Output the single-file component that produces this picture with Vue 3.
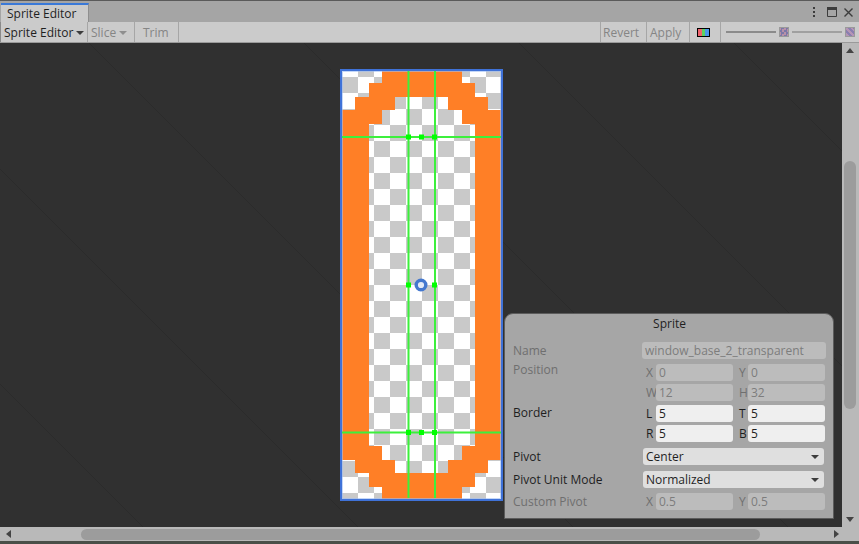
<template>
  <div class="window">
    <div class="tabbar">
      <div class="tab">Sprite Editor</div>
      <div class="window-icons">
        <svg width="4" height="12" viewBox="0 0 4 12"><rect x="1" y="1" width="2" height="2" /><rect x="1" y="5" width="2" height="2" /><rect x="1" y="9" width="2" height="2" /></svg>
        <svg width="11" height="11" viewBox="0 0 11 11"><path d="M0.5 1.5h9v8h-9z" fill="none" stroke="#3c3c3c" /><rect y="0" width="10" height="3" fill="#3c3c3c" /></svg>
        <svg class="close" width="11" height="11" viewBox="0 0 11 11"><path d="M1.5 1.5l8 8M9.5 1.5l-8 8" stroke="#3c3c3c" stroke-width="1.4" fill="none" /></svg>
      </div>
    </div>

    <div class="toolbar">
      <div class="tool mode">Sprite Editor<span class="caret"></span></div>
      <div class="tool off slice">Slice<span class="caret light"></span></div>
      <div class="tool off trim">Trim</div>
      <div class="spacer"></div>
      <div class="tool off revert">Revert</div>
      <div class="tool off apply">Apply</div>
      <div class="tool channels">
        <svg width="13" height="9" viewBox="0 0 13 9">
          <rect x="0" y="0" width="13" height="9" fill="#000" />
          <rect x="1" y="1" width="4" height="7" fill="#f0646e" />
          <rect x="5" y="1" width="3" height="7" fill="#5ed25e" />
          <rect x="8" y="1" width="4" height="7" fill="#4a96ea" />
        </svg>
      </div>
      <div class="sliders">
        <div class="track dark"></div>
        <span class="swatch"></span>
        <div class="track"></div>
        <span class="swatch last"></span>
      </div>
    </div>

    <div class="middle">
      <div class="canvas">
        <svg class="diagonals" width="842" height="485" viewBox="0 42 842 485">
          <line v-for="d in diagonals" :key="d" :x1="d + 42" y1="42" :x2="d + 527" y2="527" />
        </svg>

        <svg class="sprite" width="166" height="436" viewBox="339 67 166 436">
          <defs>
            <pattern id="checker" patternUnits="userSpaceOnUse" x="342" y="77" width="32" height="32">
              <rect width="32" height="32" fill="#fff" />
              <rect width="16" height="16" fill="#c9c9c9" />
              <rect x="16" y="16" width="16" height="16" fill="#c9c9c9" />
            </pattern>
          </defs>
          <rect x="342" y="70" width="159.5" height="430" fill="url(#checker)" />
          <rect
            v-for="(s, i) in orangeRects"
            :key="i"
            :x="s.x"
            :y="s.y"
            :width="s.w"
            :height="s.h"
            fill="#ff7f26"
            shape-rendering="crispEdges"
          />
          <rect x="341" y="70" width="161" height="430" fill="none" stroke="#3f72d8" stroke-width="2" />
          <rect x="342.5" y="71.5" width="158" height="427" fill="none" stroke="#9dbcf4" stroke-opacity="0.6" />
          <g class="guides" stroke="#3cf03c" stroke-width="2">
            <line x1="408.5" y1="71" x2="408.5" y2="498" />
            <line x1="435" y1="71" x2="435" y2="498" />
            <line x1="342" y1="137" x2="501" y2="137" />
            <line x1="342" y1="432.5" x2="501" y2="432.5" />
          </g>
          <rect v-for="(h, i) in handles" :key="i" :x="h[0] - 2.5" :y="h[1] - 2.5" width="5" height="5" fill="#00ff00" />
          <circle cx="421" cy="285" r="4.8" fill="#e3eaf6" stroke="#4478cf" stroke-width="3.4" />
        </svg>

        <div class="panel">
          <div class="panel-title">Sprite</div>

          <div class="row">
            <div class="label dim">Name</div>
            <div class="field off name">window_base_2_transparent</div>
          </div>

          <div class="row position">
            <div class="label dim up3">Position</div>
            <div class="pairs">
              <div v-for="p in positionFields" :key="p.letter" class="pair dim">
                <span class="letter">{{ p.letter }}</span>
                <div class="field off">{{ p.value }}</div>
              </div>
            </div>
          </div>

          <div class="row border-row">
            <div class="label up1">Border</div>
            <div class="pairs">
              <div v-for="p in borderFields" :key="p.letter" class="pair">
                <span class="letter">{{ p.letter }}</span>
                <div class="field on">{{ p.value }}</div>
              </div>
            </div>
          </div>

          <div class="row pivot">
            <div class="label">Pivot</div>
            <div class="select">Center<span class="caret"></span></div>
          </div>

          <div class="row pivot-mode">
            <div class="label">Pivot Unit Mode</div>
            <div class="select">Normalized<span class="caret"></span></div>
          </div>

          <div class="row custom">
            <div class="label dim">Custom Pivot</div>
            <div class="pairs">
              <div v-for="p in customFields" :key="p.letter" class="pair dim">
                <span class="letter">{{ p.letter }}</span>
                <div class="field off">{{ p.value }}</div>
              </div>
            </div>
          </div>
        </div>
      </div>

      <div class="vscroll">
        <span class="arrow up"></span>
        <div class="vthumb"></div>
        <span class="arrow down"></span>
      </div>
    </div>

    <div class="hscroll">
      <span class="arrow left"></span>
      <div class="hthumb"></div>
      <span class="arrow right"></span>
    </div>
    <div class="under"></div>
  </div>
</template>

<script setup>
const positionFields = [
  { letter: 'X', value: '0' },
  { letter: 'Y', value: '0' },
  { letter: 'W', value: '12' },
  { letter: 'H', value: '32' }
]
const borderFields = [
  { letter: 'L', value: '5' },
  { letter: 'T', value: '5' },
  { letter: 'R', value: '5' },
  { letter: 'B', value: '5' }
]
const customFields = [
  { letter: 'X', value: '0.5' },
  { letter: 'Y', value: '0.5' }
]

// faint background lines, every 215px along x
const diagonals = [-598, -383, -168, 47, 262, 477, 692]

// orange texels of the 12x32 sprite, [from, to] columns per row
const capRows = [
  [[3, 9]],
  [[2, 10]],
  [[1, 4], [8, 11]],
  [[0, 3], [9, 12]]
]
const sideRow = [[0, 2], [10, 12]]
const texelW = 159.5 / 12
const texelH = 430 / 32

const orangeRects = []
for (let row = 0; row < 32; row++) {
  let spans = sideRow
  if (row < 4) spans = capRows[row]
  if (row > 27) spans = capRows[31 - row]
  for (const [from, to] of spans) {
    orangeRects.push({
      x: 342 + from * texelW,
      y: 70 + row * texelH,
      w: (to - from) * texelW,
      h: texelH
    })
  }
}

const handles = [
  [408.5, 137], [421.5, 137], [434.5, 137],
  [408.5, 285], [434.5, 285],
  [408.5, 432.5], [421.5, 432.5], [434.5, 432.5]
]
</script>

<style>
html,
body {
  margin: 0;
  background: #4a4f48;
  overflow: hidden;
}
</style>

<style scoped>
.window {
  width: 859px;
  height: 544px;
  display: flex;
  flex-direction: column;
  font-family: "Open Sans", "Noto Sans", sans-serif;
  font-size: 12px;
  color: #1f1f1f;
  overflow: hidden;
}

.tabbar {
  height: 22px;
  flex: none;
  box-sizing: border-box;
  padding-top: 1px;
  background: #a5a5a5;
  border-top: 1px solid #5a5a5a;
  display: flex;
  align-items: flex-end;
  justify-content: space-between;
}

.tab {
  width: 88px;
  height: 19px;
  margin-left: 1px;
  box-sizing: border-box;
  padding-left: 6px;
  line-height: 18px;
  background: #cbcbcb;
  border-top: 2px solid #3a79d8;
  border-right: 1px solid #8f8f8f;
  white-space: nowrap;
}

.window-icons {
  display: flex;
  align-items: center;
  gap: 11px;
  height: 20px;
  padding-right: 5px;
}

.window-icons svg {
  fill: #3c3c3c;
}

.window-icons .close {
  margin-left: -6px;
}

.toolbar {
  height: 21px;
  flex: none;
  box-sizing: border-box;
  background: #cbcbcb;
  border-bottom: 1px solid #9a9a9a;
  display: flex;
}

.tool {
  display: flex;
  align-items: center;
  box-sizing: border-box;
  border-right: 1px solid #a6a6a6;
  white-space: nowrap;
  line-height: 20px;
  padding-top: 1px;
}

.tool.off {
  color: #858585;
}

.mode {
  width: 88px;
  padding-left: 3px;
  border-left: 1px solid #8a8a8a;
}

.slice {
  width: 47px;
  padding-left: 3px;
}

.trim {
  width: 44px;
  padding-left: 8px;
}

.spacer {
  flex: 1;
  border-right: 1px solid #a6a6a6;
}

.revert {
  width: 46px;
  padding-left: 2px;
}

.apply {
  width: 43px;
  padding-left: 3px;
}

.channels {
  width: 31px;
  padding-left: 7px;
  padding-top: 0;
}

.sliders {
  width: 138px;
  flex: none;
  display: flex;
  align-items: center;
  padding-left: 5px;
  box-sizing: border-box;
}

.track {
  width: 50px;
  height: 2px;
  background: #a0a0a0;
}

.track.dark {
  background: #8b8b8b;
}

.swatch {
  width: 10px;
  height: 10px;
  margin: 0 3px;
  background: repeating-conic-gradient(#7c78a8 0 25%, #b890a8 0 50%) 0 0 / 5px 5px;
  outline: 1px solid #9a9a9a;
  outline-offset: -1px;
}

.swatch.last {
  background: repeating-linear-gradient(45deg, #8a7fb0 0 2px, #b595b5 2px 4px);
}

.caret {
  width: 0;
  height: 0;
  margin-left: 3px;
  border-left: 4px solid transparent;
  border-right: 4px solid transparent;
  border-top: 4px solid #3c3c3c;
}

.caret.light {
  border-top-color: #8f8f8f;
}

.middle {
  flex: 1;
  min-height: 0;
  display: flex;
}

.canvas {
  flex: 1;
  position: relative;
  background: #303030;
  overflow: hidden;
}

.diagonals {
  position: absolute;
  left: 0;
  top: 0;
  stroke: #2b2b2b;
}

.sprite {
  position: absolute;
  left: 339px;
  top: 24px;
}

.panel {
  position: absolute;
  left: 504px;
  top: 270px;
  width: 330px;
  height: 206px;
  box-sizing: border-box;
  padding: 0 7px 0 8px;
  background: #a6a6a6;
  border: 1px solid #5c5c5c;
  border-radius: 9px 9px 0 0;
}

.panel-title {
  height: 28px;
  line-height: 20px;
  text-align: center;
}

.row {
  display: grid;
  grid-template-columns: 129px 1fr;
}

.label {
  line-height: 17px;
  white-space: nowrap;
}

.label.up3 {
  margin-top: -3px;
}

.label.up1 {
  margin-top: -1px;
}

.dim {
  color: #6f6f6f;
}

.field {
  height: 17px;
  line-height: 17px;
  box-sizing: border-box;
  padding-left: 3px;
  border-radius: 3px;
  white-space: nowrap;
}

.field.off {
  background: #bcbcbc;
  color: #7d7d7d;
}

.field.on {
  background: #efefef;
  color: #222;
}

.position {
  margin-top: 5px;
}

.border-row {
  margin-top: 4px;
}

.pivot {
  margin-top: 6px;
}

.pivot-mode {
  margin-top: 6px;
}

.custom {
  margin-top: 5px;
}

.pairs {
  display: grid;
  grid-template-columns: 92px 91px;
  row-gap: 3px;
}

.pair {
  display: flex;
  align-items: center;
}

.letter {
  width: 14px;
  flex: none;
  padding-left: 4px;
  box-sizing: border-box;
  line-height: 17px;
}

.pair:nth-child(even) .letter {
  padding-left: 5px;
}

.pair .field {
  width: 77px;
}

.select {
  height: 17px;
  margin: 0 2px 0 1px;
  padding: 0 5px 0 3px;
  line-height: 17px;
  background: #dfdfdf;
  border-radius: 3px;
  display: flex;
  align-items: center;
  justify-content: space-between;
}

.vscroll {
  width: 17px;
  flex: none;
  position: relative;
  background: #b9b9b9;
}

.vthumb {
  position: absolute;
  left: 2px;
  top: 118px;
  width: 12px;
  height: 248px;
  border-radius: 6px;
  background: #9c9c9c;
}

.hscroll {
  height: 14px;
  flex: none;
  position: relative;
  background: #b9b9b9;
}

.hthumb {
  position: absolute;
  left: 81px;
  top: 2px;
  width: 679px;
  height: 11px;
  border-radius: 6px;
  background: #9c9c9c;
}

.under {
  height: 3px;
  flex: none;
  background: #4a4f48;
}

.arrow {
  position: absolute;
  width: 0;
  height: 0;
}

.arrow.up {
  left: 4px;
  top: 5px;
  border-left: 4px solid transparent;
  border-right: 4px solid transparent;
  border-bottom: 5px solid #444;
}

.arrow.down {
  left: 4px;
  bottom: 5px;
  border-left: 4px solid transparent;
  border-right: 4px solid transparent;
  border-top: 5px solid #444;
}

.arrow.left {
  left: 6px;
  top: 3px;
  border-top: 4px solid transparent;
  border-bottom: 4px solid transparent;
  border-right: 5px solid #444;
}

.arrow.right {
  right: 20px;
  top: 3px;
  border-top: 4px solid transparent;
  border-bottom: 4px solid transparent;
  border-left: 5px solid #444;
}
</style>
